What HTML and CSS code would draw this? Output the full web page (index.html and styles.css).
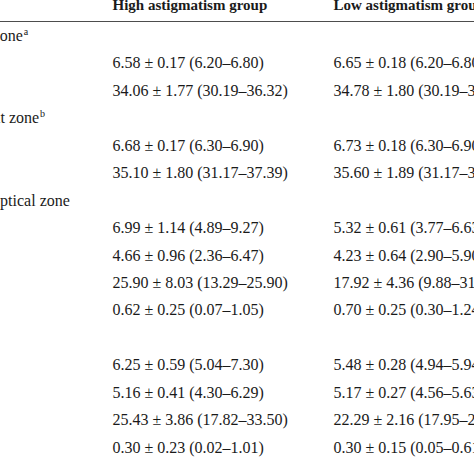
FILE: index.html
```html
<!DOCTYPE html>
<html lang="en">
<head>
    <meta charset="UTF-8">
    <meta name="viewport" content="width=device-width, initial-scale=1.0">
    <title>Lens zone parameters</title>
    <link rel="stylesheet" href="styles.css">
</head>
<body>
    <table class="data-table">
        <thead>
            <tr>
                <th class="label-col"></th>
                <th class="group-col">High astigmatism group</th>
                <th class="group-col">Low astigmatism group</th>
            </tr>
        </thead>
        <tbody>
            <tr>
                <td class="zone zone-steep">Steep zone<sup>a</sup></td>
                <td></td>
                <td></td>
            </tr>
            <tr>
                <td></td>
                <td>6.58 &plusmn; 0.17 (6.20&ndash;6.80)</td>
                <td>6.65 &plusmn; 0.18 (6.20&ndash;6.80)</td>
            </tr>
            <tr>
                <td></td>
                <td>34.06 &plusmn; 1.77 (30.19&ndash;36.32)</td>
                <td>34.78 &plusmn; 1.80 (30.19&ndash;36.32)</td>
            </tr>
            <tr>
                <td class="zone zone-flat">Flat zone<sup>b</sup></td>
                <td></td>
                <td></td>
            </tr>
            <tr>
                <td></td>
                <td>6.68 &plusmn; 0.17 (6.30&ndash;6.90)</td>
                <td>6.73 &plusmn; 0.18 (6.30&ndash;6.90)</td>
            </tr>
            <tr>
                <td></td>
                <td>35.10 &plusmn; 1.80 (31.17&ndash;37.39)</td>
                <td>35.60 &plusmn; 1.89 (31.17&ndash;37.39)</td>
            </tr>
            <tr>
                <td class="zone zone-optical">Central optical zone</td>
                <td></td>
                <td></td>
            </tr>
            <tr>
                <td></td>
                <td>6.99 &plusmn; 1.14 (4.89&ndash;9.27)</td>
                <td>5.32 &plusmn; 0.61 (3.77&ndash;6.63)</td>
            </tr>
            <tr>
                <td></td>
                <td>4.66 &plusmn; 0.96 (2.36&ndash;6.47)</td>
                <td>4.23 &plusmn; 0.64 (2.90&ndash;5.90)</td>
            </tr>
            <tr>
                <td></td>
                <td>25.90 &plusmn; 8.03 (13.29&ndash;25.90)</td>
                <td>17.92 &plusmn; 4.36 (9.88&ndash;31.20)</td>
            </tr>
            <tr>
                <td></td>
                <td>0.62 &plusmn; 0.25 (0.07&ndash;1.05)</td>
                <td>0.70 &plusmn; 0.25 (0.30&ndash;1.24)</td>
            </tr>
            <tr>
                <td>&nbsp;</td>
                <td></td>
                <td></td>
            </tr>
            <tr>
                <td></td>
                <td>6.25 &plusmn; 0.59 (5.04&ndash;7.30)</td>
                <td>5.48 &plusmn; 0.28 (4.94&ndash;5.94)</td>
            </tr>
            <tr>
                <td></td>
                <td>5.16 &plusmn; 0.41 (4.30&ndash;6.29)</td>
                <td>5.17 &plusmn; 0.27 (4.56&ndash;5.63)</td>
            </tr>
            <tr>
                <td></td>
                <td>25.43 &plusmn; 3.86 (17.82&ndash;33.50)</td>
                <td>22.29 &plusmn; 2.16 (17.95&ndash;27.40)</td>
            </tr>
            <tr>
                <td></td>
                <td>0.30 &plusmn; 0.23 (0.02&ndash;1.01)</td>
                <td>0.30 &plusmn; 0.15 (0.05&ndash;0.61)</td>
            </tr>
        </tbody>
    </table>
</body>
</html>
```

FILE: styles.css
```css
html, body {
    overflow: hidden;
}
body {
    margin: 0;
    background-color: #ffffff;
    color: #1a1a1a;
    font-family: "Liberation Serif", "Times New Roman", serif;
}
.data-table {
    border-collapse: collapse;
    table-layout: fixed;
    width: 640px;
    margin-left: -60px;
    margin-top: -5px;
}
.data-table th {
    font-size: 15px;
    font-weight: bold;
    line-height: 20px;
    text-align: left;
    white-space: nowrap;
    padding: 0 0 6px 0;
    border-bottom: 1.5px solid #4d4d4d;
}
.label-col {
    width: 172.5px;
}
.group-col {
    width: 221px;
}
.data-table th:last-child {
    width: auto;
}
.data-table td {
    font-size: 16px;
    line-height: 27.43px;
    height: 27.43px;
    padding: 0;
    white-space: nowrap;
    vertical-align: top;
}
.zone sup {
    font-size: 10px;
    line-height: 0;
    margin-left: 1px;
}
.zone-steep {
    padding-left: 13px !important;
}
.zone-flat {
    padding-left: 40px !important;
}
.zone-optical {
    padding-left: 1px !important;
}
```
